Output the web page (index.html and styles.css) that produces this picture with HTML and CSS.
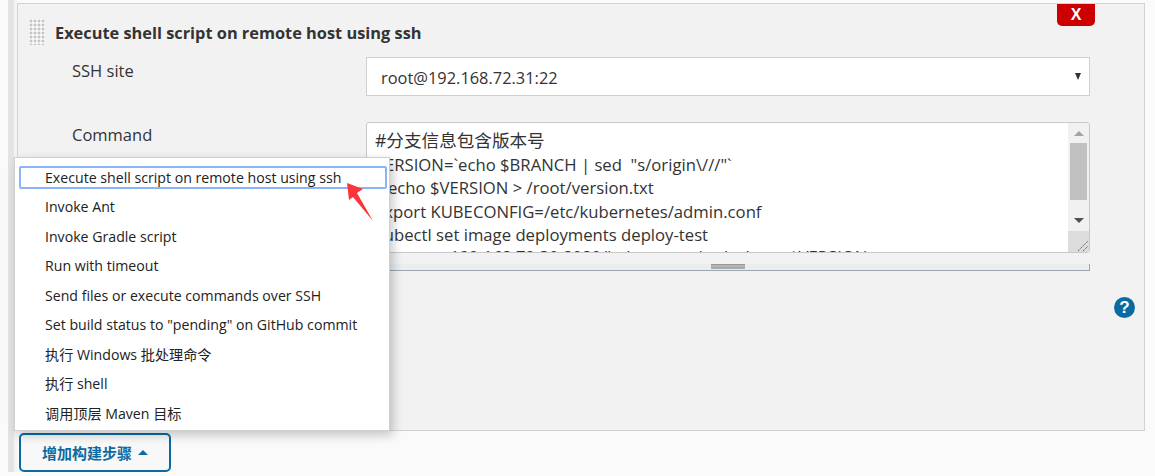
FILE: index.html
```html
<!DOCTYPE html>
<html lang="zh">
<head>
<meta charset="utf-8">
<title>Execute shell script on remote host using ssh</title>
<link rel="stylesheet" href="styles.css">
</head>
<body>
<div class="page">
  <section class="step">
    <button class="close" type="button">X</button>
    <header class="step-head">
      <span class="grip"></span>
      <h2 class="step-title">Execute shell script on remote host using ssh</h2>
    </header>
    <div class="row row-site">
      <label class="row-label">SSH site</label>
      <div class="select">
        <span>root@192.168.72.31:22</span>
        <span class="select-arrow"></span>
      </div>
    </div>
    <div class="row row-command">
      <label class="row-label">Command</label>
      <div class="editor-wrap">
        <div class="editor">
          <div class="editor-text">
            <div class="line-cjk">#分支信息包含版本号</div>
            <div>VERSION=`echo $BRANCH | sed&nbsp; "s/origin\///"`</div>
            <div>&nbsp;&nbsp;&nbsp;echo $VERSION &gt; /root/version.txt</div>
            <div>export KUBECONFIG=/etc/kubernetes/admin.conf</div>
            <div>kubectl set image deployments deploy-test</div>
            <div class="line-indent">192.168.72.30:8080/kubernetes/web-demo:$VERSION</div>
          </div>
          <div class="scrollbar">
            <span class="sb-up"></span>
            <span class="sb-thumb"></span>
            <span class="sb-down"></span>
            <span class="sb-corner">
              <svg width="21" height="21" viewBox="0 0 21 21"><path d="M10 20 20 10M15 20 20 15" stroke="#666" stroke-width="1" fill="none" stroke-dasharray="1.5 .7"/></svg>
            </span>
          </div>
        </div>
        <div class="grabber"><span class="grabber-handle"></span></div>
      </div>
    </div>
    <div class="help-row">
      <span class="help">?</span>
    </div>
  </section>
  <div class="add-row">
    <button class="add-btn" type="button">增加构建步骤<span class="caret"></span></button>
  </div>

  <ul class="menu">
    <li class="menu-item is-focus">Execute shell script on remote host using ssh</li>
    <li class="menu-item">Invoke Ant</li>
    <li class="menu-item">Invoke Gradle script</li>
    <li class="menu-item">Run with timeout</li>
    <li class="menu-item">Send files or execute commands over SSH</li>
    <li class="menu-item">Set build status to "pending" on GitHub commit</li>
    <li class="menu-item">执行 Windows 批处理命令</li>
    <li class="menu-item">执行 shell</li>
    <li class="menu-item">调用顶层 Maven 目标</li>
  </ul>
  <svg class="pointer" width="32" height="44" viewBox="0 0 32 44">
    <path d="M2 2 18 8 12 12 28 40 8 16 4 19Z" fill="#f9353b"/>
  </svg>
</div>
</body>
</html>
```

FILE: styles.css
```css
* { box-sizing: border-box; }
html, body { margin: 0; padding: 0; }
body {
  background: #fafafa;
  font-family: "Open Sans", "Noto Sans CJK SC", sans-serif;
  color: #333;
  overflow: hidden;
  height: 476px;
}
.page {
  position: relative;
  margin-left: 8px;
  padding: 3px 0 0 3px;
  border-left: 6px solid #e4e4e4;
  width: 1137px;
  height: 472px;
  background: linear-gradient(#f4f4f4, #f4f4f4) no-repeat left top / 3px 100%;
}
.step {
  position: relative;
  height: 428px;
  border: 1px solid #d3d3d3;
  background: #f2f2f2;
  padding: 0 54px 0 11px;
}
.close {
  position: absolute;
  top: 0;
  right: 49px;
  width: 38px;
  height: 22px;
  padding: 0;
  border: 0;
  border-radius: 0 0 5px 5px;
  background: #cc0000;
  color: #fff;
  font: bold 16px "Liberation Sans", sans-serif;
}
.step-head {
  display: flex;
  align-items: center;
  gap: 10px;
  height: 26px;
  margin-top: 15px;
}
.grip {
  width: 16px;
  height: 26px;
  background: radial-gradient(circle at center, #c4c4c4 0 1.3px, transparent 1.7px) 0 0 / 4px 4px, #f8f8f8;
  flex: none;
}
.step-title {
  margin: 2px 0 0;
  font-size: 16.35px;
  font-weight: 700;
  color: #333;
  line-height: 24px;
}
.row { display: flex; }
.row-label {
  width: 337px;
  padding-left: 43px;
  font-size: 16.5px;
  line-height: 24px;
  color: #333;
  flex: none;
}
.row-site { margin-top: 12px; height: 65px; }
.row-site .row-label { margin-top: 2px; }
.select {
  flex: 1;
  height: 39px;
  display: flex;
  align-items: center;
  justify-content: space-between;
  padding: 2px 8px 0 14px;
  background: #fff;
  border: 1px solid #cfcfcf;
  font-size: 16.4px;
}
.select-arrow {
  width: 0;
  height: 0;
  margin-top: -2px;
  border: 3.5px solid transparent;
  border-top: 7px solid #333;
  border-bottom: 0;
}
.row-command { height: 150px; }
.row-command .row-label { margin-top: 1px; }
.editor-wrap { flex: 1; }
.editor {
  display: flex;
  height: 131px;
  border: 1px solid #c9c9c9;
  border-radius: 3px;
  background: #fff;
  overflow: hidden;
}
.editor-text {
  flex: 1;
  padding: 6px 0 0 8px;
  font-size: 16.7px;
  line-height: 23.5px;
  white-space: nowrap;
  overflow: hidden;
  color: #333;
}
.line-cjk { font-size: 17.6px; }
.line-indent { padding-left: 75px; margin-top: -2px; }
.scrollbar {
  width: 21px;
  flex: none;
  background: #f1f1f1;
  display: flex;
  flex-direction: column;
  align-items: center;
  position: relative;
}
.sb-up {
  margin-top: 8px;
  border: 5px solid transparent;
  border-top: 0;
  border-bottom: 5px solid #a3a3a3;
}
.sb-thumb {
  width: 17px;
  height: 57px;
  margin-top: 7px;
  background: #c1c1c1;
}
.sb-down {
  margin-top: 18px;
  border: 5px solid transparent;
  border-bottom: 0;
  border-top: 5px solid #505050;
}
.sb-corner {
  position: absolute;
  right: 0;
  bottom: 0;
  width: 21px;
  height: 21px;
  background: #dcdcdc;
  display: block;
}
.sb-corner svg { display: block; }
.grabber {
  height: 7px;
  margin-top: 11px;
  background: #eaeef0;
  border-bottom: 1px solid #9aa7b2;
  border-right: 1px solid #9aa7b2;
  display: flex;
  justify-content: center;
}
.grabber-handle {
  width: 34px;
  height: 5px;
  margin-top: 0;
  border-top: 1px solid #999;
  border-bottom: 2px solid #aaa;
  background: #b5b5b5;
}
.help-row {
  display: flex;
  justify-content: flex-end;
  margin: 25px -45px 0 0;
}
.help {
  width: 21px;
  height: 21px;
  border-radius: 50%;
  background: #0b6aa2;
  color: #fff;
  font: bold 17px/21px "Liberation Sans", sans-serif;
  text-align: center;
}
.add-row { padding: 2px 0 0 2px; }
.add-btn {
  display: flex;
  align-items: center;
  justify-content: center;
  gap: 6px;
  width: 152px;
  height: 39px;
  padding: 0;
  background: #f8f8f8;
  border: 2px solid #0b6aa2;
  border-radius: 5px;
  color: #0b6aa2;
  font: 700 15px "Open Sans", "Noto Sans CJK SC", sans-serif;
}
.caret {
  border: 5px solid transparent;
  border-top: 0;
  border-bottom: 5px solid #0b6aa2;
}
.menu {
  position: absolute;
  left: 0;
  top: 157px;
  width: 376px;
  margin: 0;
  padding: 8px 2px 1px 4px;
  list-style: none;
  background: #fff;
  border: 1px solid #d0d0d0;
  box-shadow: 3px 4px 10px rgba(0,0,0,.22);
}
.menu-item {
  height: 29.5px;
  padding-left: 26px;
  font-size: 14.15px;
  line-height: 28px;
  color: #222;
  white-space: nowrap;
}
.is-focus {
  height: 23px;
  line-height: 20px;
  margin-bottom: 4px;
  border: 2px solid #8ab4f8;
  border-radius: 2px;
  padding-left: 24px;
}
.pointer {
  position: absolute;
  left: 331px;
  top: 181px;
}
```
